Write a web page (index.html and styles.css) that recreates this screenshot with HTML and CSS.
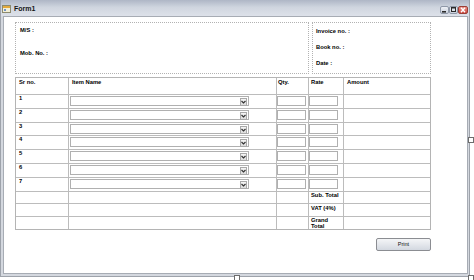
FILE: index.html
```html
<!DOCTYPE html>
<html>
<head>
<meta charset="utf-8">
<title>Form1</title>
<link rel="stylesheet" href="styles.css">
</head>
<body>
<div class="window">
  <div class="titlebar">
    <svg class="ticon" width="9" height="8" viewBox="0 0 9 8"><rect x="0.5" y="0.5" width="8" height="7" fill="#f3efd6" stroke="#8c8a6e"/><rect x="1" y="1" width="7" height="2" fill="#e3a93c"/><rect x="2" y="4" width="2" height="2" fill="#6f8fc4"/></svg>
    <span class="title">Form1</span>
    <div class="ctrls">
      <span class="cb"><svg width="9" height="8" viewBox="0 0 9 8"><rect x="2" y="5" width="4" height="1.6" fill="#2b2b2b"/></svg></span>
      <span class="cb"><svg width="9" height="8" viewBox="0 0 9 8"><rect x="2.5" y="1.5" width="4" height="4" fill="none" stroke="#2b2b2b"/><rect x="2" y="1" width="5" height="1.5" fill="#2b2b2b"/></svg></span>
      <span class="cb close"><svg width="10" height="8" viewBox="0 0 10 8"><path d="M3 1.8 L7 6.2 M7 1.8 L3 6.2" stroke="#fff" stroke-width="1.4"/></svg></span>
    </div>
  </div>
  <div class="client">
    <div class="top">
      <div class="box box-left">
        <div class="lbl">M/S :</div>
        <div class="lbl">Mob. No. :</div>
      </div>
      <div class="box box-right">
        <div class="lbl">Invoice no. :</div>
        <div class="lbl">Book no. :</div>
        <div class="lbl">Date :</div>
      </div>
    </div>
    <div class="grid">
      <div class="c hd">Sr no.</div><div class="c hd">Item Name</div><div class="c hd qty">Qty.</div><div class="c hd nar">Rate</div><div class="c hd">Amount</div>

      <div class="c">1</div><div class="c item"><div class="combo"><span class="dd"><svg width="7" height="8" viewBox="0 0 7 8"><path d="M1.5 3 L3.5 5 L5.5 3" fill="none" stroke="#333" stroke-width="1.2"/></svg></span></div></div><div class="c box-cell"><div class="tb"></div></div><div class="c box-cell"><div class="tb"></div></div><div class="c"></div>
      <div class="c">2</div><div class="c item"><div class="combo"><span class="dd"><svg width="7" height="8" viewBox="0 0 7 8"><path d="M1.5 3 L3.5 5 L5.5 3" fill="none" stroke="#333" stroke-width="1.2"/></svg></span></div></div><div class="c box-cell"><div class="tb"></div></div><div class="c box-cell"><div class="tb"></div></div><div class="c"></div>
      <div class="c">3</div><div class="c item"><div class="combo"><span class="dd"><svg width="7" height="8" viewBox="0 0 7 8"><path d="M1.5 3 L3.5 5 L5.5 3" fill="none" stroke="#333" stroke-width="1.2"/></svg></span></div></div><div class="c box-cell"><div class="tb"></div></div><div class="c box-cell"><div class="tb"></div></div><div class="c"></div>
      <div class="c">4</div><div class="c item"><div class="combo"><span class="dd"><svg width="7" height="8" viewBox="0 0 7 8"><path d="M1.5 3 L3.5 5 L5.5 3" fill="none" stroke="#333" stroke-width="1.2"/></svg></span></div></div><div class="c box-cell"><div class="tb"></div></div><div class="c box-cell"><div class="tb"></div></div><div class="c"></div>
      <div class="c">5</div><div class="c item"><div class="combo"><span class="dd"><svg width="7" height="8" viewBox="0 0 7 8"><path d="M1.5 3 L3.5 5 L5.5 3" fill="none" stroke="#333" stroke-width="1.2"/></svg></span></div></div><div class="c box-cell"><div class="tb"></div></div><div class="c box-cell"><div class="tb"></div></div><div class="c"></div>
      <div class="c">6</div><div class="c item"><div class="combo"><span class="dd"><svg width="7" height="8" viewBox="0 0 7 8"><path d="M1.5 3 L3.5 5 L5.5 3" fill="none" stroke="#333" stroke-width="1.2"/></svg></span></div></div><div class="c box-cell"><div class="tb"></div></div><div class="c box-cell"><div class="tb"></div></div><div class="c"></div>
      <div class="c">7</div><div class="c item"><div class="combo"><span class="dd"><svg width="7" height="8" viewBox="0 0 7 8"><path d="M1.5 3 L3.5 5 L5.5 3" fill="none" stroke="#333" stroke-width="1.2"/></svg></span></div></div><div class="c box-cell"><div class="tb"></div></div><div class="c box-cell"><div class="tb"></div></div><div class="c"></div>

      <div class="c"></div><div class="c"></div><div class="c"></div><div class="c nar">Sub. Total</div><div class="c"></div>
      <div class="c"></div><div class="c"></div><div class="c"></div><div class="c nar vat">VAT (4%)</div><div class="c"></div>
      <div class="c"></div><div class="c"></div><div class="c"></div><div class="c nar grand">Grand<br>Total</div><div class="c"></div>
    </div>
    <div class="actions"><button class="btn">Print</button></div>
  </div>
</div>
<span class="handle h-right"></span>
<span class="handle h-bottom"></span>
<span class="handle h-corner"></span>
</body>
</html>
```

FILE: styles.css
```css
body {
  margin: 0;
  width: 474px;
  height: 280px;
  background: #ffffff;
  position: relative;
  overflow: hidden;
  font-family: "Liberation Sans", Arial, sans-serif;
  color: #000;
}

.window {
  width: 470px;
  height: 277px;
  box-sizing: border-box;
  display: flex;
  flex-direction: column;
  background: #d4d8df;
  border: 1px solid #9ea3ab;
  border-top: 0;
}

.titlebar {
  height: 16px;
  flex: none;
  display: flex;
  align-items: center;
  padding-left: 1px;
  background: linear-gradient(#aeb6c6, #cfd5df 45%, #dde1e9);
}

.ticon {
  flex: none;
  margin-top: 1px;
}

.title {
  font-weight: bold;
  font-size: 7px;
  line-height: 8px;
  margin-left: 3px;
  margin-top: 2px;
  color: #151515;
}

.ctrls {
  margin-left: auto;
  margin-right: 1px;
  margin-top: 4px;
  display: flex;
}

.cb {
  width: 9px;
  height: 8px;
  box-sizing: border-box;
  border: 1px solid #8f98a8;
  border-radius: 2px;
  background: linear-gradient(#eef1f6, #c9d0db);
  display: flex;
  overflow: hidden;
}

.cb svg {
  margin: -1px;
}

.cb.close {
  width: 10px;
  border-color: #9a3e36;
  background: linear-gradient(#ec9188, #cc4a40);
}

.client {
  flex: 1;
  margin: 0 1px 2px 2px;
  background: #ffffff;
  border: 1px solid #a7acb4;
  padding: 5px 0 0 11px;
  display: flex;
  flex-direction: column;
}

.top {
  display: flex;
  gap: 3px;
  height: 52px;
}

.box {
  box-sizing: border-box;
  height: 52px;
  border: 1px dotted #b2b2b2;
  display: flex;
  flex-direction: column;
}

.box-left {
  width: 294px;
  padding: 4px 4px;
  gap: 16px;
}

.box-right {
  width: 119px;
  padding: 5px 3px;
  gap: 9px;
}

.lbl {
  font-weight: bold;
  font-size: 5.8px;
  line-height: 7px;
  white-space: nowrap;
}

.grid {
  margin-top: 3px;
  width: 416px;
  box-sizing: border-box;
  display: grid;
  grid-template-columns: 52px 207px 31px 34px 86px;
  grid-template-rows: 16px 13px 13px 12px 13px 13px 13px 13px 11px 12px 12px;
  gap: 1px;
  border: 1px solid #b4b4b4;
  background: #bcbcbc;
}

.c {
  background: #ffffff;
  font-weight: bold;
  font-size: 5.8px;
  line-height: 7px;
  padding: 0 3px;
  overflow: hidden;
  white-space: nowrap;
}

.c.hd {
  padding-top: 1px;
}

.c.nar {
  padding-left: 2px;
}

.c.qty {
  padding-left: 1px;
}

.c.vat {
  padding-top: 1px;
}

.c.grand {
  line-height: 6px;
  white-space: normal;
}

.c.item {
  padding: 1px 0 0 1px;
}

.c.box-cell {
  padding: 1px 0 0 0;
}

.combo {
  width: 179px;
  height: 10px;
  box-sizing: border-box;
  border: 1px solid #b0b0b0;
  background: #ffffff;
  display: flex;
  justify-content: flex-end;
  padding: 1px;
}

.dd {
  width: 7px;
  height: 8px;
  box-sizing: border-box;
  background: linear-gradient(#f6f6f6, #dcdcdc);
  border: 1px solid #a9a9a9;
  display: flex;
  align-items: center;
  justify-content: center;
  overflow: hidden;
}

.dd svg {
  flex: none;
}

.tb {
  width: 29px;
  height: 10px;
  box-sizing: border-box;
  border: 1px solid #b0b0b0;
  background: #ffffff;
}

.actions {
  width: 416px;
  display: flex;
  justify-content: flex-end;
  margin-top: 8px;
}

.btn {
  width: 55px;
  height: 13px;
  margin: 0;
  padding: 0;
  box-sizing: border-box;
  border: 1px solid #8b8d92;
  border-radius: 2px;
  background: linear-gradient(#f4f5f7, #e4e7ec 50%, #d3d8e0);
  font-family: "Liberation Sans", Arial, sans-serif;
  font-size: 5.5px;
  line-height: 11px;
  color: #111;
}

.handle {
  position: absolute;
  width: 4px;
  height: 4px;
  border: 1px solid #6d6d6d;
  background: #ffffff;
}

.h-right {
  left: 468px;
  top: 137px;
}

.h-bottom {
  left: 234px;
  top: 275px;
}

.h-corner {
  left: 468px;
  top: 275px;
}
```
